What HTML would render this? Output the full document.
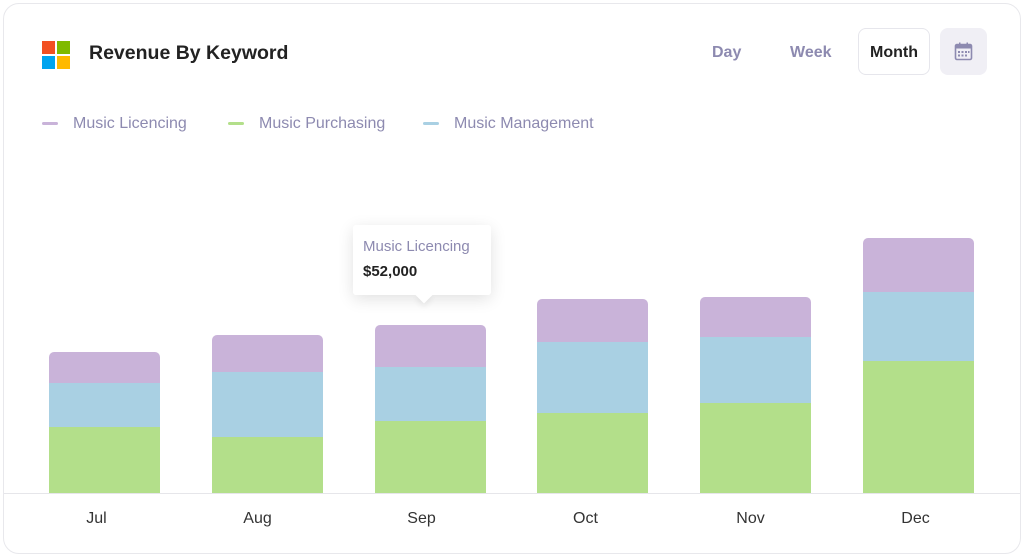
<!DOCTYPE html>
<html><head><style>
body{margin:0;width:1024px;height:557px;background:#fff;font-family:"Liberation Sans",sans-serif;position:relative;overflow:hidden}
.card{position:absolute;left:3px;top:3px;width:1016px;height:549px;border:1px solid #e8e8ec;border-radius:16px}
.a{position:absolute}
.bar{position:absolute;width:111px;border-radius:5px 5px 0 0;overflow:hidden}
.lab{position:absolute;top:510px;width:111px;text-align:center;font-size:16px;color:#333}
.leg{position:absolute;top:115px;font-size:16px;color:#8d8ab0}
.ln{position:absolute;top:122px;width:16px;height:3px;border-radius:2px}
</style></head><body>
<div class="card"></div>
<div class="a" style="left:42px;top:41px;width:13px;height:13px;background:#f25022"></div>
<div class="a" style="left:57px;top:41px;width:13px;height:13px;background:#7fba00"></div>
<div class="a" style="left:42px;top:56px;width:13px;height:13px;background:#00a4ef"></div>
<div class="a" style="left:57px;top:56px;width:13px;height:13px;background:#ffb900"></div>
<div class="a" style="left:89px;top:42px;font-size:19.5px;font-weight:bold;color:#222">Revenue By Keyword</div>
<div class="a" style="left:712px;top:44px;font-size:16px;font-weight:bold;color:#8d8ab0">Day</div>
<div class="a" style="left:790px;top:44px;font-size:16px;font-weight:bold;color:#8d8ab0">Week</div>
<div class="a" style="left:858px;top:28px;width:70px;height:45px;border:1px solid #e6e6ec;border-radius:8px;text-align:center;line-height:47px;font-size:16px;font-weight:bold;color:#222">Month</div>
<div class="a" style="left:940px;top:28px;width:47px;height:47px;background:#f0eff5;border-radius:8px"></div>
<svg class="a" style="left:954px;top:42px" width="19" height="19" viewBox="0 0 19 19"><rect x="1.5" y="2.5" width="16" height="15" rx="1.5" fill="none" stroke="#8d8ab0" stroke-width="1.6"/><rect x="1.5" y="2.5" width="16" height="4" fill="#8d8ab0"/><g fill="#8d8ab0"><rect x="4" y="9" width="2" height="2"/><rect x="7.5" y="9" width="2" height="2"/><rect x="11" y="9" width="2" height="2"/><rect x="14" y="9" width="1.5" height="2"/><rect x="4" y="12.5" width="2" height="2"/><rect x="7.5" y="12.5" width="2" height="2"/><rect x="11" y="12.5" width="2" height="2"/></g><rect x="5" y="0.5" width="1.5" height="3" fill="#8d8ab0"/><rect x="12.5" y="0.5" width="1.5" height="3" fill="#8d8ab0"/></svg>
<div class="ln" style="left:42px;background:#c9b3d9"></div><div class="leg" style="left:73px">Music Licencing</div>
<div class="ln" style="left:228px;background:#b3df8a"></div><div class="leg" style="left:259px">Music Purchasing</div>
<div class="ln" style="left:423px;background:#a9d0e3"></div><div class="leg" style="left:454px">Music Management</div>

<div class="bar" style="left:49px;top:352px;height:141px;background:linear-gradient(#c9b3d9 0 31px,#a9d0e3 31px 75px,#b3df8a 75px)"></div>
<div class="bar" style="left:212px;top:335px;height:158px;background:linear-gradient(#c9b3d9 0 37px,#a9d0e3 37px 102px,#b3df8a 102px)"></div>
<div class="bar" style="left:375px;top:325px;height:168px;background:linear-gradient(#c9b3d9 0 42px,#a9d0e3 42px 96px,#b3df8a 96px)"></div>
<div class="bar" style="left:537px;top:299px;height:194px;background:linear-gradient(#c9b3d9 0 43px,#a9d0e3 43px 114px,#b3df8a 114px)"></div>
<div class="bar" style="left:700px;top:297px;height:196px;background:linear-gradient(#c9b3d9 0 40px,#a9d0e3 40px 106px,#b3df8a 106px)"></div>
<div class="bar" style="left:863px;top:238px;height:255px;background:linear-gradient(#c9b3d9 0 54px,#a9d0e3 54px 123px,#b3df8a 123px)"></div>
<div class="a" style="left:4px;top:493px;width:1016px;height:1px;background:#e6e6ea"></div>
<div class="lab" style="left:41px">Jul</div><div class="lab" style="left:202px">Aug</div><div class="lab" style="left:366px">Sep</div><div class="lab" style="left:530px">Oct</div><div class="lab" style="left:695px">Nov</div><div class="lab" style="left:860px">Dec</div>

<div class="a" style="left:353px;top:225px;width:138px;height:70px;background:#fff;border-radius:3px;box-shadow:0 4px 16px rgba(0,0,0,0.12)"></div>
<div class="a" style="left:418px;top:289px;width:12px;height:12px;background:#fff;transform:rotate(45deg);box-shadow:3px 3px 6px rgba(0,0,0,0.06)"></div>
<div class="a" style="left:353px;top:225px;width:138px;height:70px;background:#fff;border-radius:3px"></div>
<div class="a" style="left:363px;top:238px;font-size:15px;color:#8d8ab0">Music Licencing</div>
<div class="a" style="left:363px;top:263px;font-size:15px;font-weight:bold;color:#222">$52,000</div>
</body></html>
